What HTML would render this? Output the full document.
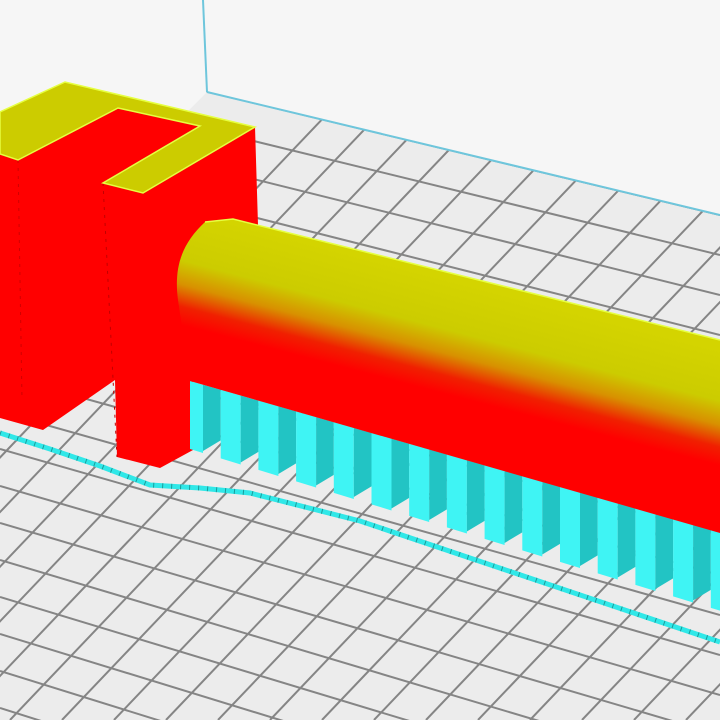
<!DOCTYPE html>
<html><head><style>html,body{margin:0;padding:0;background:#f4f4f4;overflow:hidden;width:720px;height:720px}svg{display:block;position:absolute;left:0;top:0}</style></head>
<body>
<svg id="s" width="720" height="720" viewBox="0 0 720 720" xmlns="http://www.w3.org/2000/svg">
<defs>
<clipPath id="plate"><polygon points="207,92 720,215 720,720 0,720 0,300"/></clipPath>
<linearGradient id="bg" gradientUnits="userSpaceOnUse" x1="360" y1="255" x2="330" y2="370">
<stop offset="0" stop-color="#d4d400"/><stop offset="0.42" stop-color="#cccc00"/><stop offset="0.62" stop-color="#d89000"/><stop offset="0.8" stop-color="#f02000"/><stop offset="0.95" stop-color="#ff0000"/><stop offset="1" stop-color="#ff0000"/>
</linearGradient>
</defs>
<rect width="720" height="720" fill="#f6f6f6"/>
<g clip-path="url(#plate)">
<rect width="720" height="720" fill="#ececec"/>
<g id="grid" stroke="#858585" stroke-width="2" fill="none"></g>
</g>
<line x1="203" y1="0" x2="207" y2="92" stroke="#6ec6dc" stroke-width="2"/>
<line x1="207" y1="92" x2="720" y2="215" stroke="#6ec6dc" stroke-width="2"/>
<polyline points="0,433 50,449 100,466 150,485 200,488 250,493 360,521 720,642" fill="none" stroke="#30e8e8" stroke-width="5"/>
<polyline points="0,433 50,449 100,466 150,485 200,488 250,493 360,521 720,642" fill="none" stroke="#1a9a9a" stroke-width="5" stroke-dasharray="1 8"/>
<polygon points="0,154 18,160 118,108 200,126 103,183 143,193 255,127 258,225 193,260 193,450 160,468 117,457 115,380 43,430 0,418" fill="#ff0000"/>
<line x1="103" y1="183" x2="117" y2="457" stroke="#c00000" stroke-width="1" stroke-dasharray="3 5"/>
<line x1="18" y1="160" x2="22" y2="400" stroke="#d00000" stroke-width="1" stroke-dasharray="3 5"/>
<polygon points="0,112 65,82 255,127 143,193 103,183 200,126 118,108 18,160 0,154" fill="#cccc00" stroke="#e6ff40" stroke-width="1.5"/>
<g id="sup"></g>
<path d="M205,222 L233,219 L720,340 L720,533 L190,381 L178,300 C174,270 180,245 205,222 Z" fill="url(#bg)"/>
<path d="M205,222 L233,219 L720,340" fill="none" stroke="#e6ff40" stroke-width="1.5"/>
</svg>
<script>
var g=document.getElementById('grid'),ns='http://www.w3.org/2000/svg';
function ln(a,b,c,d){var l=document.createElementNS(ns,'line');l.setAttribute('x1',a);l.setAttribute('y1',b);l.setAttribute('x2',c);l.setAttribute('y2',d);g.appendChild(l);}
for(var k=0;k<20;k++){ln(0,42+37*k,720,215+40*k);}
for(var j=-5;j<30;j++){var xb=10+52*j;ln(xb,720,xb+720/1.05,0);}
var s=document.getElementById('sup');
function yb(x){return 381+0.286*(x-190);}function ys(x){return 449+0.305*(x-190);}
for(var k=0;k<16;k++){var x=183+37.7*k;var a=Math.max(x,190),b=Math.min(x+20,720),c=Math.min(x+37.7,720);
if(a<720){var p=document.createElementNS(ns,'polygon');p.setAttribute('points',a+','+yb(a)+' '+b+','+yb(b)+' '+b+','+ys(b)+' '+a+','+ys(a));p.setAttribute('fill','#3ff4f4');s.appendChild(p);}
if(b<720){var q=document.createElementNS(ns,'polygon');q.setAttribute('points',b+','+yb(b)+' '+c+','+yb(c)+' '+c+','+(ys(c)-18)+' '+b+','+(ys(b)-2));q.setAttribute('fill','#22c4c4');s.appendChild(q);}}
</script>
</body></html>
